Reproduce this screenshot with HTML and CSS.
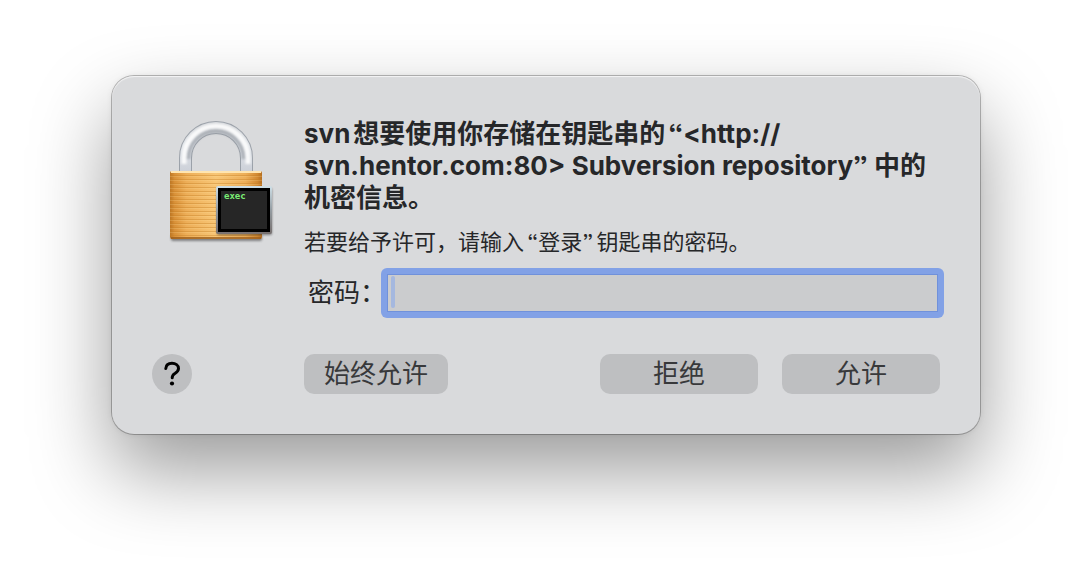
FILE: index.html
```html
<!-- Keychain access dialog -->
<!DOCTYPE html>
<html lang="zh-CN">
  <head>
    <meta charset="UTF-8" />
    <meta name="viewport" content="width=device-width, initial-scale=1.0" />
    <title>钥匙串访问</title>
    <link rel="stylesheet" href="styles.css">
  </head>
  <body>
    <form class="dialog" role="dialog" aria-labelledby="title">
      <svg class="lock" width="116" height="132" viewBox="0 0 116 132" aria-hidden="true">
        <defs>
          <linearGradient id="gold" x1="0" y1="0" x2="1" y2="0">
            <stop offset="0" stop-color="#bd7624" />
            <stop offset="0.05" stop-color="#d99138" />
            <stop offset="0.18" stop-color="#edae58" />
            <stop offset="0.5" stop-color="#f8c676" />
            <stop offset="0.82" stop-color="#edae58" />
            <stop offset="0.95" stop-color="#d28932" />
            <stop offset="1" stop-color="#b56e20" />
          </linearGradient>
          <linearGradient id="steel" x1="0" y1="0" x2="0" y2="1">
            <stop offset="0" stop-color="#d3d6da" />
            <stop offset="0.4" stop-color="#dde1e6" />
            <stop offset="1" stop-color="#ccd0d8" />
          </linearGradient>
          <linearGradient id="frame" x1="0" y1="0" x2="0" y2="1">
            <stop offset="0" stop-color="#cfe0e8" />
            <stop offset="0.5" stop-color="#949ca2" />
            <stop offset="1" stop-color="#77706f" />
          </linearGradient>
          <pattern id="grooves" y="1" width="8" height="4" patternUnits="userSpaceOnUse">
            <rect width="8" height="1" fill="#c47d22" opacity="0.4" />
            <rect y="1" width="8" height="1" fill="#ffe0a0" opacity="0.2" />
          </pattern>
          <filter id="soft" x="-20%" y="-20%" width="140%" height="140%">
            <feGaussianBlur stdDeviation="1.200" />
          </filter>
        </defs>
        <!-- shackle -->
        <path d="M25.500 55V40a30.500 30.500 0 0 1 61 0v15" fill="none" stroke="#9ba1a9" stroke-width="13" />
        <path d="M25.500 55V40a30.500 30.500 0 0 1 61 0v15" fill="none" stroke="url(#steel)" stroke-width="11" />
        <path d="M28 41a28 28 0 0 1 56 0" fill="none" stroke="#8f949c" stroke-width="5" opacity="0.55" filter="url(#soft)" />
        <path d="M24 46V40a32 32 0 0 1 64 0v6" fill="none" stroke="#fff" stroke-width="5" opacity="0.85" filter="url(#soft)" />
        <!-- body -->
        <rect x="11" y="117" width="91" height="6" rx="2" fill="#444" opacity="0.6" filter="url(#soft)" />
        <rect x="10" y="53" width="92" height="68" rx="2" fill="url(#gold)" />
        <rect x="10" y="56" width="92" height="62" fill="url(#grooves)" />
        <rect x="11" y="53" width="90" height="2" fill="#ffe5b0" />
        <rect x="11" y="119" width="90" height="2" fill="#9c5e1c" opacity="0.8" />
        <!-- terminal badge -->
        <rect x="57" y="70" width="55" height="47" rx="2" fill="#222" opacity="0.5" filter="url(#soft)" />
        <rect x="56" y="68" width="56" height="48" rx="2" fill="url(#frame)" />
        <rect x="58" y="70" width="52" height="44" fill="#000" />
        <rect x="61" y="73" width="46" height="38" fill="#262626" />
        <text class="exec" x="64" y="81">exec</text>
      </svg>

      <div class="content">
        <h1 id="title">svn<span class="gap"></span>想要使用你存储在钥匙串的<span class="gap"></span>“&lt;http://<br>svn.hentor.com:80&gt; Subversion repository” 中的<br>机密信息。</h1>
        <p>若要给予许可，请输入<span class="gap"></span>“登录”<span class="gap"></span>钥匙串的密码。</p>
        <div class="field">
          <label for="password">密码：</label>
          <div class="input-wrap">
            <input type="password" id="password" />
          </div>
        </div>
      </div>

      <button type="button" class="help" aria-label="帮助">
        <svg width="20" height="26" viewBox="0 0 20 26" aria-hidden="true">
          <path d="M3.800 7.500C4 4 6.500 2.300 10 2.300s6.500 2 6.500 5.200c0 2.700-1.700 3.800-3.600 5-1.900 1.100-2.700 2-2.700 4.300" fill="none" stroke="#000" stroke-width="3" stroke-linecap="round" />
          <circle cx="10" cy="22.500" r="2.100" />
        </svg>
      </button>
      <div class="buttons">
        <button type="button" class="always">始终允许</button>
        <button type="button">拒绝</button>
        <button type="submit">允许</button>
      </div>
    </form>
  </body>
</html>
```
FILE: styles.css
```css
* {
  box-sizing: border-box;
}
body {
  margin: 0;
  min-height: 100vh;
  padding: 76px 112px;
  background: #ffffff;
  font-family: Inter, "Noto Sans CJK SC", sans-serif;
  font-feature-settings: "ss03";
  color: #262729;
}
.dialog {
  display: grid;
  grid-template-columns: 152px 1fr;
  row-gap: 36px;
  padding: 42px 36px 40px 40px;
  background: #d9dadc;
  border-radius: 22px;
  box-shadow: inset 0 1px 1px #f4f4f5, 0 0 0 1px rgba(0, 0, 0, 0.25),
    0 0 6px rgba(0, 0, 0, 0.08), 0 36px 80px rgba(0, 0, 0, 0.4);
}
.lock {
  margin-left: 8px;
}
.exec {
  font: bold 9px "DejaVu Sans Mono", monospace;
  fill: #7bee75;
}
h1 {
  margin: 0;
  font-size: 26px;
  font-weight: 700;
  line-height: 32px;
  white-space: nowrap;
}
/* thin gap between latin and chinese text */
.gap {
  margin-left: 3px;
}
p {
  margin: 16px 0 0;
  font-size: 22px;
  line-height: 24px;
}
.field {
  display: flex;
  align-items: center;
  margin: 14px 0 0 4px;
}
label {
  width: 73px;
  font-size: 26px;
  line-height: 32px;
  white-space: nowrap;
}
/* focus ring around the password box */
.input-wrap {
  position: relative;
  flex: 1;
  padding: 6px;
  border-radius: 6px;
  background: #82a1e6;
}
.input-wrap::before {
  content: "";
  position: absolute;
  left: 10px;
  top: 8px;
  width: 4px;
  height: 32px;
  border-radius: 2px;
  background: #a5b8df;
}
input {
  display: block;
  width: 100%;
  height: 38px;
  padding: 0 8px;
  border: 1px solid #7091db;
  border-radius: 0;
  background: #cbccce;
  font-size: 24px;
  outline: none;
}
button {
  height: 40px;
  padding: 0;
  border: none;
  border-radius: 10px;
  background: #bebfc1;
  color: #38393b;
  font-family: inherit;
  font-size: 26px;
  line-height: 38px;
}
.help {
  display: flex;
  align-items: center;
  justify-content: center;
  width: 40px;
  border-radius: 50%;
}
.buttons {
  display: flex;
  gap: 24px;
  margin-right: 4px;
}
.buttons button {
  width: 158px;
}
.buttons .always {
  width: 144px;
  margin-right: auto;
}
```
